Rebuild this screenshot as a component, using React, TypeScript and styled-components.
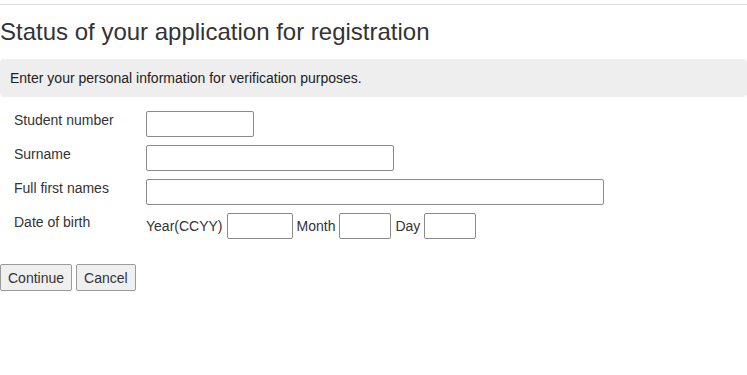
import styled, { createGlobalStyle } from 'styled-components';

const GlobalStyle = createGlobalStyle`
  body {
    margin: 0;
    background: #fff;
    font-family: "Liberation Sans", Arial, sans-serif;
    color: #333;
  }
`;

const Page = styled('div')`
  padding-top: 4px;
`;

const TopRule = styled('div')`
  height: 1px;
  background: #dcdcdc;
`;

const Title = styled('h1')`
  margin: 13px 0 0;
  font-size: 24px;
  font-weight: 400;
  line-height: 28px;
  color: #333;
`;

const InfoBox = styled('div')`
  margin-top: 13px;
  background: #eee;
  border-radius: 4px;
  padding: 11px 10px;
  font-size: 14px;
  line-height: 16px;
  color: #222;
`;

const Form = styled('form')`
  margin-top: 14px;
  display: flex;
  flex-direction: column;
  gap: 8px;
`;

const Row = styled('div')`
  display: flex;
  align-items: center;
  height: 26px;
`;

const Label = styled('label')`
  width: 132px;
  padding-left: 14px;
  font-size: 14px;
  align-self: flex-start;
  padding-top: 1px;
  color: #333;
`;

const TextInput = styled('input')<{ $w: number }>`
  box-sizing: border-box;
  width: ${(p) => p.$w}px;
  height: 26px;
  border: 1px solid #8a8a8a;
  border-radius: 2px;
  padding: 0 4px;
  font: inherit;
  background: #fff;
`;

const DateGroup = styled('div')`
  display: flex;
  align-items: center;
  gap: 4px;
  font-size: 14px;
  color: #333;
`;

const Buttons = styled('div')`
  margin-top: 25px;
  display: flex;
  gap: 4px;
`;

const Button = styled('button')`
  height: 27px;
  padding: 0 7px;
  font-family: "Liberation Sans", Arial, sans-serif;
  font-size: 14px;
  color: #333;
  background: #efefef;
  border: 1px solid #9a9a9a;
  border-radius: 2px;
`;

export default function App() {
  return (
    <Page>
      <GlobalStyle />
      <TopRule />
      <Title>Status of your application for registration</Title>
      <InfoBox>Enter your personal information for verification purposes.</InfoBox>
      <Form onSubmit={(e) => e.preventDefault()}>
        <Row>
          <Label>Student number</Label>
          <TextInput $w={108} />
        </Row>
        <Row>
          <Label>Surname</Label>
          <TextInput $w={248} />
        </Row>
        <Row>
          <Label>Full first names</Label>
          <TextInput $w={458} />
        </Row>
        <Row>
          <Label>Date of birth</Label>
          <DateGroup>
            <span>Year(CCYY)</span>
            <TextInput $w={66} />
            <span>Month</span>
            <TextInput $w={52} />
            <span>Day</span>
            <TextInput $w={52} />
          </DateGroup>
        </Row>
      </Form>
      <Buttons>
        <Button type="button">Continue</Button>
        <Button type="button">Cancel</Button>
      </Buttons>
    </Page>
  );
}
